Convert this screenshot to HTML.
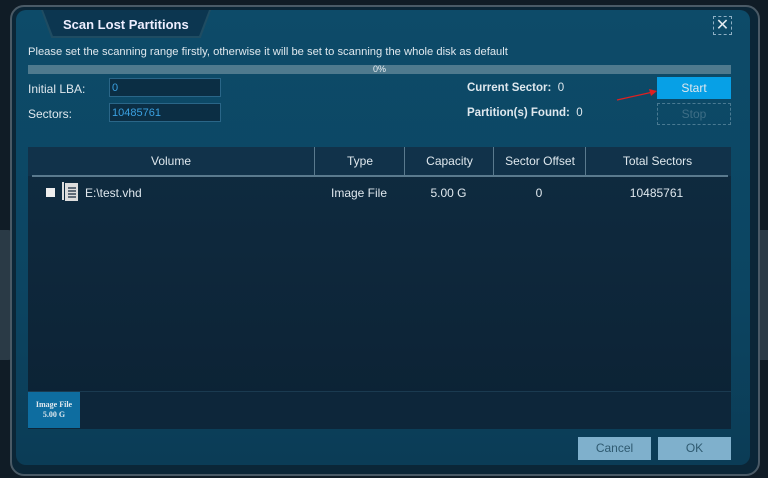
<html><head><style>
body{margin:0;width:768px;height:478px;background:#101c26;font-family:"Liberation Sans",sans-serif;overflow:hidden;position:relative;color:#dfe8ee}
.a{position:absolute}
</style></head><body>
<div class="a" style="left:0;top:230px;width:14px;height:130px;background:#2a3a46;border-radius:0 6px 6px 0"></div>
<div class="a" style="right:0;top:230px;width:14px;height:130px;background:#2a3a46;border-radius:6px 0 0 6px"></div>
<div class="a" style="left:10px;top:5px;width:746px;height:467px;border:2px solid #4a5a66;border-radius:14px;background:#0b2637"></div>
<div class="a" style="left:16px;top:10px;width:734px;height:455px;border-radius:10px;background:linear-gradient(#0d4b69,#0c4562 60%,#0b3c56)"></div>
<div class="a" style="left:41px;top:10px;width:170px;height:28px;background:#1f4c62;clip-path:polygon(0 0,100% 0,94% 100%,6% 100%)"></div>
<div class="a" style="left:43px;top:10px;width:166px;height:26px;background:#0c3650;clip-path:polygon(0 0,100% 0,94% 100%,6% 100%)"></div>
<div class="a" style="left:63px;top:17px;font-size:13px;font-weight:bold;color:#eef">Scan Lost Partitions</div>
<div class="a" style="left:713px;top:16px;width:17px;height:17px;border:1px dashed #8fb0c4;color:#dfe8ee;font-size:16px;line-height:17px;text-align:center">✕</div>
<div class="a" style="left:28px;top:46px;font-size:11.2px">Please set the scanning range firstly, otherwise it will be set to scanning the whole disk as default</div>
<div class="a" style="left:28px;top:65px;width:703px;height:9px;background:#4f7a8e;font-size:9px;line-height:9px;text-align:center;color:#e8eef2">0%</div>
<div class="a" style="left:28px;top:82px;font-size:12px">Initial LBA:</div>
<div class="a" style="left:28px;top:107px;font-size:12px">Sectors:</div>
<div class="a" style="left:109px;top:78px;width:112px;height:19px;background:#0b2e44;border:1px solid #2a6688;color:#3aa0e0;font-size:11px;line-height:19px;padding-left:2px;box-sizing:border-box">0</div>
<div class="a" style="left:109px;top:103px;width:112px;height:19px;background:#0b2e44;border:1px solid #2a6688;color:#3aa0e0;font-size:11px;line-height:19px;padding-left:2px;box-sizing:border-box">10485761</div>
<div class="a" style="left:467px;top:82px;font-size:11.5px"><b>Current Sector:</b>&nbsp; 0</div>
<div class="a" style="left:467px;top:107px;font-size:11.5px"><b>Partition(s) Found:</b>&nbsp; 0</div>
<svg class="a" style="left:615px;top:84px" width="45" height="20"><line x1="2" y1="16" x2="38" y2="8" stroke="#e02020" stroke-width="1.2"/><polygon points="42,7 34,5 36,12" fill="#e02020"/></svg>
<div class="a" style="left:657px;top:77px;width:74px;height:22px;background:#07a0e6;font-size:12px;line-height:22px;text-align:center">Start</div>
<div class="a" style="left:657px;top:103px;width:72px;height:20px;border:1px dashed #4a7a92;font-size:12px;line-height:20px;text-align:center;color:#3e6e86">Stop</div>
<div class="a" style="left:28px;top:147px;width:703px;height:282px;background:linear-gradient(#0f2b40,#0c2234)"></div>
<div class="a" style="left:28px;top:147px;width:703px;height:29px;background:#11324a;font-size:12px;line-height:28px">
<span class="a" style="left:0;width:286px;text-align:center">Volume</span>
<span class="a" style="left:286px;width:90px;text-align:center;border-left:1px solid #5a7a8e">Type</span>
<span class="a" style="left:376px;width:89px;text-align:center;border-left:1px solid #5a7a8e">Capacity</span>
<span class="a" style="left:465px;width:92px;text-align:center;border-left:1px solid #5a7a8e">Sector Offset</span>
<span class="a" style="left:557px;width:143px;text-align:center;border-left:1px solid #5a7a8e">Total Sectors</span>
</div>
<div class="a" style="left:32px;top:175px;width:696px;height:2px;background:#5a7a8e"></div>
<div class="a" style="left:46px;top:188px;width:9px;height:9px;background:#eee"></div>
<svg class="a" style="left:61px;top:182px" width="18" height="20"><rect x="1" y="0" width="2" height="18" fill="#ddd"/><rect x="4" y="1" width="13" height="18" fill="#ddd"/><g stroke="#0c2234" stroke-width="1.2"><line x1="7" y1="6" x2="15" y2="6"/><line x1="7" y1="9" x2="15" y2="9"/><line x1="7" y1="12" x2="15" y2="12"/><line x1="7" y1="15" x2="15" y2="15"/></g></svg>
<div class="a" style="left:85px;top:186px;font-size:12px">E:\test.vhd</div>
<div class="a" style="left:314px;top:186px;width:90px;text-align:center;font-size:12px">Image File</div>
<div class="a" style="left:404px;top:186px;width:89px;text-align:center;font-size:12px">5.00 G</div>
<div class="a" style="left:493px;top:186px;width:92px;text-align:center;font-size:12px">0</div>
<div class="a" style="left:585px;top:186px;width:143px;text-align:center;font-size:12px">10485761</div>
<div class="a" style="left:28px;top:391px;width:703px;height:37px;background:#0d263a;border-top:1px solid #1a3a50"></div>
<div class="a" style="left:28px;top:392px;width:52px;height:36px;background:#0e6da0;font-family:'Liberation Serif',serif;font-weight:bold;font-size:8px;text-align:center;line-height:10px;padding-top:8px;box-sizing:border-box">Image File<br>5.00 G</div>
<div class="a" style="left:578px;top:437px;width:73px;height:23px;background:#7fb0cc;color:#2f5a70;font-size:12px;line-height:23px;text-align:center">Cancel</div>
<div class="a" style="left:658px;top:437px;width:73px;height:23px;background:#7fb0cc;color:#2f5a70;font-size:12px;line-height:23px;text-align:center">OK</div>
</body></html>
